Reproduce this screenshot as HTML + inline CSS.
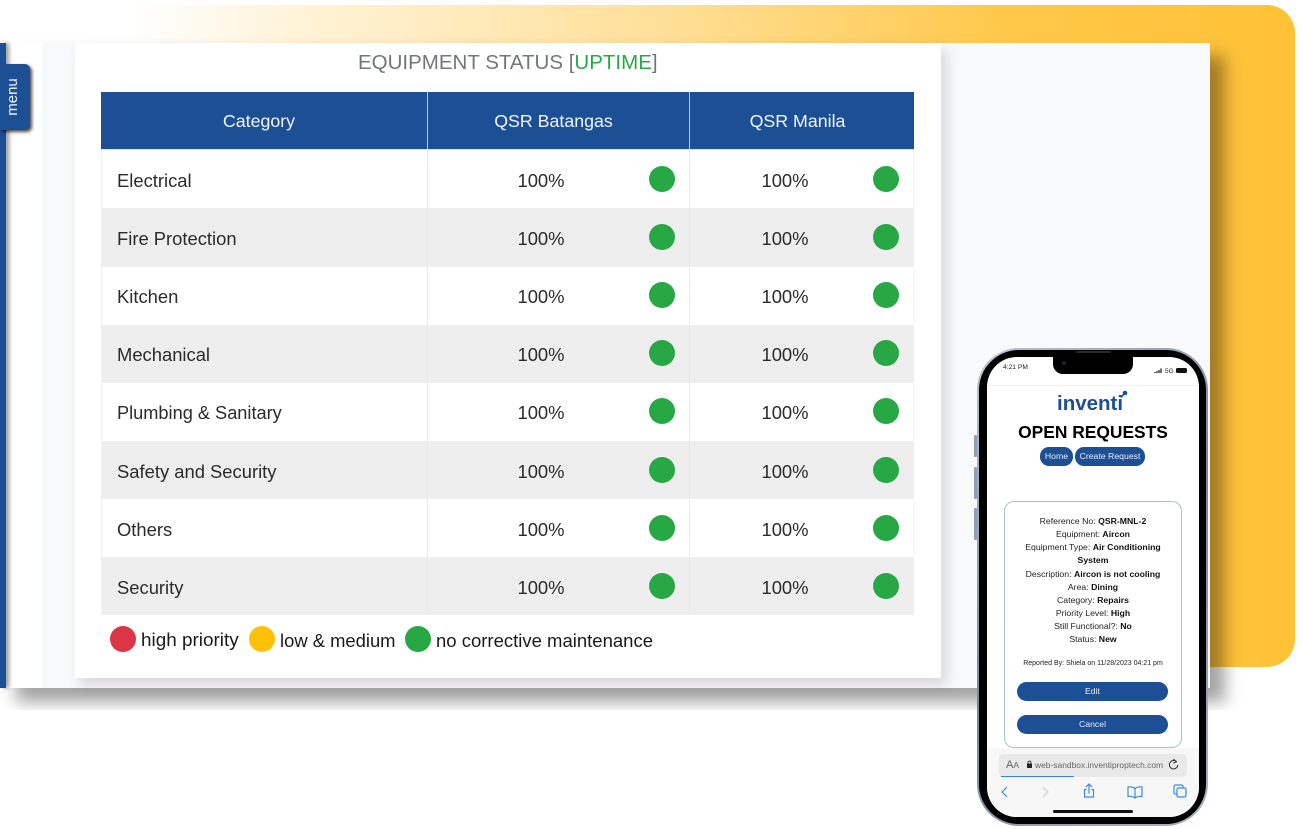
<!DOCTYPE html>
<html><head><meta charset="utf-8"><style>
html,body{margin:0;padding:0;background:#fff}
#p{position:relative;width:1302px;height:829px;overflow:hidden;background:#fff;font-family:"Liberation Sans",sans-serif}
#p div{position:absolute}
.t{white-space:nowrap;line-height:1}
.r{left:101px;width:813px}
.l{left:117px;font-size:18.4px;color:#2b2b2b;white-space:nowrap;line-height:20px}
.c1,.c2{font-size:18.4px;color:#2b2b2b;white-space:nowrap;line-height:20px;text-align:center;width:80px}
.c1{left:501px}.c2{left:745px}
.d{width:26px;height:26px;border-radius:50%;background:#28a745}
.h{top:92px;height:57px;background:#1c4f94}
.ht{top:92.5px;height:57px;line-height:57px;text-align:center;color:#f2f5fa;font-size:17.8px;white-space:nowrap}
.m{left:1005px;width:176px;text-align:center;font-size:8.7px;line-height:13px;color:#222;white-space:nowrap}
.m b{color:#111}
.bt{left:1017px;width:151px;height:19px;border-radius:10px;background:#1c4f94;color:#eef;text-align:center;font-size:8.7px;line-height:19px}
</style></head><body><div id="p">
<div style="left:130px;top:5px;width:1165px;height:662px;border-radius:0 28px 28px 0;background:linear-gradient(90deg,rgba(255,193,53,0) 0%,rgba(255,193,53,.2) 15%,rgba(255,193,53,.5) 45%,#ffc84a 75%,#ffc135 100%)"></div>
<div style="left:0;top:0;width:1302px;height:710px;overflow:hidden">
  <div style="left:16px;top:56px;width:1209px;height:646px;background:rgba(0,0,0,.36);filter:blur(8px)"></div>
</div>
<div style="left:0;top:43px;width:1210px;height:645px;background:#f8f9fb"></div>
<div style="left:0;top:43px;width:42px;height:645px;background:#fff"></div>
<div style="left:0;top:43px;width:6px;height:645px;background:#1c4f94;box-shadow:3px 0 4px rgba(0,0,0,.4)"></div>
<div style="left:75px;top:43px;width:866px;height:635px;background:#fff;box-shadow:5px 7px 12px rgba(90,75,95,.2)"></div>
<div style="left:0;top:64px;width:30px;height:66px;background:#1c4f94;border-radius:0 5px 5px 0;box-shadow:2px 2px 3px rgba(0,0,0,.7)"></div>
<div class="t" style="left:-10.500px;top:89px;width:46px;height:16px;line-height:16px;text-align:center;color:#f2f5fa;font-size:15px;transform:rotate(-90deg)">menu</div>
<div class="t" style="left:358px;top:50.500px;font-size:20.500px;line-height:24px;color:#72777a">EQUIPMENT STATUS [<span style="color:#28a745">UPTIME</span>]</div>
<div class="h" style="left:101px;width:813px"></div>
<div style="left:427px;top:92px;width:1px;height:57px;background:#b9c8dc"></div>
<div style="left:689px;top:92px;width:1px;height:57px;background:#b9c8dc"></div>
<div class="ht" style="left:101px;width:316px">Category</div>
<div class="ht" style="left:428px;width:251px">QSR Batangas</div>
<div class="ht" style="left:690px;width:215px">QSR Manila</div>
<div class="r" style="top:149px;height:1px;background:#d9e0ea"></div>
<div class="r" style="top:208px;height:59px;background:#eeeeee"></div>
<div class="r" style="top:325px;height:58px;background:#eeeeee"></div>
<div class="r" style="top:441px;height:58px;background:#eeeeee"></div>
<div class="r" style="top:557px;height:58px;background:#eeeeee"></div>
<div style="left:427px;top:150px;width:1px;height:465px;background:#e8e9eb"></div>
<div style="left:689px;top:150px;width:1px;height:465px;background:#e8e9eb"></div>
<div style="left:101px;top:150px;width:1px;height:465px;background:#eef0f2"></div>
<div style="left:913px;top:150px;width:1px;height:465px;background:#eef0f2"></div>
<div class="l" style="top:170.500px">Electrical</div><div class="c1" style="top:170.500px">100%</div><div class="c2" style="top:170.500px">100%</div><div class="d" style="left:648.500px;top:166px"></div><div class="d" style="left:873px;top:166px"></div>
<div class="l" style="top:228.500px">Fire Protection</div><div class="c1" style="top:228.500px">100%</div><div class="c2" style="top:228.500px">100%</div><div class="d" style="left:648.500px;top:224px"></div><div class="d" style="left:873px;top:224px"></div>
<div class="l" style="top:286.500px">Kitchen</div><div class="c1" style="top:286.500px">100%</div><div class="c2" style="top:286.500px">100%</div><div class="d" style="left:648.500px;top:282px"></div><div class="d" style="left:873px;top:282px"></div>
<div class="l" style="top:344.500px">Mechanical</div><div class="c1" style="top:344.500px">100%</div><div class="c2" style="top:344.500px">100%</div><div class="d" style="left:648.500px;top:340px"></div><div class="d" style="left:873px;top:340px"></div>
<div class="l" style="top:402.500px;font-size:18.200px">Plumbing &amp; Sanitary</div><div class="c1" style="top:402.500px">100%</div><div class="c2" style="top:402.500px">100%</div><div class="d" style="left:648.500px;top:398px"></div><div class="d" style="left:873px;top:398px"></div>
<div class="l" style="top:461.500px">Safety and Security</div><div class="c1" style="top:461.500px">100%</div><div class="c2" style="top:461.500px">100%</div><div class="d" style="left:648.500px;top:457px"></div><div class="d" style="left:873px;top:457px"></div>
<div class="l" style="top:519.500px">Others</div><div class="c1" style="top:519.500px">100%</div><div class="c2" style="top:519.500px">100%</div><div class="d" style="left:648.500px;top:515px"></div><div class="d" style="left:873px;top:515px"></div>
<div class="l" style="top:577.500px">Security</div><div class="c1" style="top:577.500px">100%</div><div class="c2" style="top:577.500px">100%</div><div class="d" style="left:648.500px;top:573px"></div><div class="d" style="left:873px;top:573px"></div>
<div class="d" style="left:110px;top:626px;background:#dc3545"></div>
<div class="l" style="left:141px;top:630.500px;color:#1a1a1a;font-size:18.900px">high priority</div>
<div class="d" style="left:249px;top:626px;background:#ffc107"></div>
<div class="l" style="left:280px;top:630.500px;color:#1a1a1a">low &amp; medium</div>
<div class="d" style="left:405px;top:626px"></div>
<div class="l" style="left:436px;top:630.500px;color:#1a1a1a;font-size:18.500px">no corrective maintenance</div>

<!-- phone -->
<div style="left:974px;top:435px;width:3px;height:22px;background:#8fa0b5;border-radius:1px"></div>
<div style="left:974px;top:467px;width:3px;height:32px;background:#8fa0b5;border-radius:1px"></div>
<div style="left:974px;top:508px;width:3px;height:32px;background:#8fa0b5;border-radius:1px"></div>
<div style="left:977px;top:348px;width:231px;height:478px;border-radius:42px;background:linear-gradient(135deg,#b9c5d4,#77879e 50%,#aab6c6)"></div>
<div style="left:979px;top:350px;width:227px;height:474px;border-radius:40px;background:#000"></div>
<div style="left:987px;top:357px;width:212px;height:460px;border-radius:30px;background:#fff;overflow:hidden">
  <div style="left:0;top:391px;width:212px;height:69px;background:#f7f7f8"></div>
</div>
<div style="left:1053px;top:357px;width:80px;height:17px;background:#000;border-radius:0 0 10px 10px"></div>
<div style="left:1062px;top:361px;width:4px;height:4px;border-radius:50%;background:#13233d"></div>
<div style="left:1076px;top:351px;width:35px;height:2px;background:#2b2b2b;border-radius:1px"></div>
<div class="t" style="left:1003px;top:364px;font-size:6.700px;line-height:8px;color:#222">4:21 PM</div>
<svg style="position:absolute;left:1153px;top:366px" width="36" height="8" viewBox="0 0 36 8"><path d="M2 6v1M4 5v2M6 4v3M8 2.500v4.500" stroke="#222" stroke-width="1.300"/><text x="12" y="7" font-family="Liberation Sans" font-size="6.500" fill="#222">5G</text><rect x="23" y="2" width="11" height="5" rx="1.500" fill="#111"/></svg>
<div style="left:987px;top:385px;width:212px;height:1px;background:#f0f0f0"></div>
<div class="t" style="left:1057px;top:394px;font-size:20.500px;line-height:20px;font-weight:bold;color:#1c4f94">inventi</div>
<svg style="position:absolute;left:1115px;top:388px" width="16" height="14" viewBox="0 0 16 14"><path d="M6 9.500L9 6" stroke="#1c4f94" stroke-width="1.500"/><circle cx="10" cy="5" r="2.300" fill="#1c4f94"/></svg>
<div class="t" style="left:987px;top:422px;width:212px;text-align:center;font-size:17.400px;line-height:20px;font-weight:bold;color:#000">OPEN REQUESTS</div>
<div style="left:1040px;top:447px;width:33px;height:19px;border-radius:9px;background:#1c4f94;color:#eef;text-align:center;font-size:8.700px;line-height:19px">Home</div>
<div style="left:1075px;top:447px;width:70px;height:19px;border-radius:9px;background:#1c4f94;color:#eef;text-align:center;font-size:8.700px;line-height:19px">Create Request</div>
<div style="left:1004px;top:501px;width:176px;height:245px;border:1px solid #a9bfdc;border-radius:10px;background:#fff"></div>
<div class="m" style="top:515px">Reference No: <b>QSR-MNL-2</b></div>
<div class="m" style="top:528px">Equipment: <b>Aircon</b></div>
<div class="m" style="top:541px">Equipment Type: <b>Air Conditioning</b></div>
<div class="m" style="top:554px"><b>System</b></div>
<div class="m" style="top:568px">Description: <b>Aircon is not cooling</b></div>
<div class="m" style="top:581px">Area: <b>Dining</b></div>
<div class="m" style="top:594px">Category: <b>Repairs</b></div>
<div class="m" style="top:607px">Priority Level: <b>High</b></div>
<div class="m" style="top:620px">Still Functional?: <b>No</b></div>
<div class="m" style="top:633px">Status: <b>New</b></div>
<div class="m" style="top:657px;font-size:7px">Reported By: Shiela on 11/28/2023 04:21 pm</div>
<div class="bt" style="top:682px">Edit</div>
<div class="bt" style="top:715px">Cancel</div>
<div style="left:999px;top:754px;width:188px;height:23px;border-radius:5px;background:#e9e9ea"></div>
<div class="t" style="left:1006px;top:759px;font-size:11px;line-height:12px;color:#666">A<span style="font-size:8.500px">A</span></div>
<svg style="position:absolute;left:1026px;top:760px" width="7" height="9" viewBox="0 0 7 9"><rect x="1" y="3.500" width="5" height="4.500" rx=".6" fill="#222"/><path d="M2 4V2.500a1.500 1.500 0 0 1 3 0V4" fill="none" stroke="#222" stroke-width=".8"/></svg>
<div class="t" style="left:1035px;top:760px;font-size:8.450px;line-height:10px;color:#666">web-sandbox.inventiproptech.com</div>
<svg style="position:absolute;left:1167px;top:758px" width="13" height="13" viewBox="0 0 13 13"><path d="M9.800 4A4.200 4.200 0 1 0 10.800 7M6.500 1l2.800 2.800L6.300 5.200" fill="none" stroke="#333" stroke-width="1"/></svg>
<div style="left:1001px;top:776px;width:73px;height:1px;background:#2f80ed"></div>
<svg style="position:absolute;left:997px;top:783px" width="194" height="18" viewBox="0 0 194 18" fill="none" stroke="#3b8ae6" stroke-width="1.200"><path d="M10 4L5 9l5 5"/><path d="M46 4l5 5-5 5" stroke="#cfcfd2"/><path d="M92 1.500v9M89 4l3-3 3 3M89.500 6.500H87.500v7.500h9V6.500h-2"/><path d="M138 5.500c-2-1.500-4.500-2-7-1.500v9.500c2.500-.5 5 0 7 1.500 2-1.500 4.500-2 7-1.500V4c-2.500-.5-5 0-7 1.500zM138 5.500v9.500"/><rect x="180" y="5" width="9" height="9" rx="1.500"/><path d="M180 11h-1.500a1.500 1.500 0 0 1-1.500-1.500V3.500A1.500 1.500 0 0 1 178.500 2H184.500A1.500 1.500 0 0 1 186 3.500V5"/></svg>
<div style="left:1053px;top:810px;width:80px;height:3px;background:#111;border-radius:2px"></div>
</div></body></html>
